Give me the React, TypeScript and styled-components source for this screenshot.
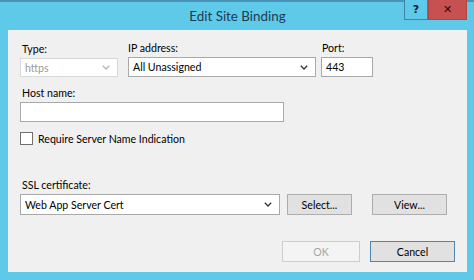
import React from "react"
import styled, { createGlobalStyle } from "styled-components"

const GlobalStyle = createGlobalStyle`
  html, body {
    margin: 0;
    padding: 0;
    background: #5fc9ea;
  }
  body {
    font-family: Lato, "Noto Sans", sans-serif;
    font-size: 10.6px;
    color: #000;
  }
`

const Frame = styled.div`
  width: 474px;
  height: 280px;
  box-sizing: border-box;
  background: #5fc9ea;
  border-top: 2px solid #4a93b4;
  padding: 0 7px 8px 8px;
  display: flex;
  flex-direction: column;
`

const TitleBar = styled.div`
  position: relative;
  height: 28px;
  display: flex;
  align-items: center;
  justify-content: center;
`

const Title = styled.div`
  font-size: 13.4px;
  color: #1c3d4f;
  margin-top: -1px;
`

const Controls = styled.div`
  position: absolute;
  top: -2px;
  right: 0;
  display: flex;
`

const CaptionButton = styled.div<{ $close?: boolean }>`
  height: 20px;
  width: ${p => (p.$close ? "39px" : "24px")};
  box-sizing: border-box;
  background: ${p => (p.$close ? "#c75151" : "#5fc9ea")};
  border: 1px solid ${p => (p.$close ? "#b04343" : "#3e86a6")};
  border-top: none;
  display: flex;
  align-items: center;
  justify-content: center;
  font-family: "DejaVu Sans", sans-serif;
  font-weight: bold;
  font-size: 11px;
  color: ${p => (p.$close ? "#2a0808" : "#0d2430")};
`

const Client = styled.div`
  flex: 1;
  background: #f0f0f0;
  padding: 11px 12px 0 12px;
  display: flex;
  flex-direction: column;
`

const Row = styled.div<{ $gap?: number; $top?: number; $end?: boolean }>`
  display: flex;
  align-items: flex-end;
  gap: ${p => p.$gap ?? 0}px;
  margin-top: ${p => p.$top ?? 0}px;
  justify-content: ${p => (p.$end ? "flex-end" : "flex-start")};
`

const Field = styled.div<{ $w: number }>`
  width: ${p => p.$w}px;
  display: flex;
  flex-direction: column;
  gap: 2px;
`

const Label = styled.div<{ $indent?: number }>`
  height: 14px;
  line-height: 14px;
  padding-left: ${p => p.$indent ?? 2}px;
  white-space: nowrap;
`

const Box = styled.div<{ $disabled?: boolean; $h?: number }>`
  height: ${p => p.$h ?? 20}px;
  box-sizing: border-box;
  background: #fff;
  border: 1px solid ${p => (p.$disabled ? "#d9d9d9" : "#a9a9a9")};
  display: flex;
  align-items: center;
  justify-content: space-between;
  padding: 0 7px 0 4px;
  color: ${p => (p.$disabled ? "#9a9a9a" : "#000")};
  white-space: nowrap;
`

const Chevron = ({ color = "#333" }: { color?: string }) => (
  <svg width="8" height="5" viewBox="0 0 8 5">
    <path d="M0.8 0.8 L4 4 L7.2 0.8" fill="none" stroke={color} strokeWidth="1.3" />
  </svg>
)

const CheckRow = styled.label`
  display: flex;
  align-items: center;
  gap: 5px;
  margin-top: 10px;
  height: 13px;
`

const CheckBox = styled.span`
  width: 13px;
  height: 13px;
  box-sizing: border-box;
  border: 1px solid #707070;
  background: #fff;
`

const Button = styled.div<{ $w: number; $disabled?: boolean; $default?: boolean }>`
  width: ${p => p.$w}px;
  height: 21px;
  box-sizing: border-box;
  display: flex;
  align-items: center;
  justify-content: center;
  background: ${p => (p.$disabled ? "#f4f4f4" : "#e1e1e1")};
  border: 1px solid
    ${p => (p.$disabled ? "#cdcdcd" : p.$default ? "#4f86ad" : "#adadad")};
  color: ${p => (p.$disabled ? "#a6a6a6" : "#000")};
`

export default function App() {
  return (
    <>
      <GlobalStyle />
      <Frame>
        <TitleBar>
          <Title>Edit Site Binding</Title>
          <Controls>
            <CaptionButton>?</CaptionButton>
            <CaptionButton $close>✕</CaptionButton>
          </Controls>
        </TitleBar>
        <Client>
          <Row>
            <Field $w={98}>
              <Label>Type:</Label>
              <Box $disabled $h={19}>
                https
                <Chevron color="#b5b5b5" />
              </Box>
            </Field>
            <Field $w={188} style={{ marginLeft: 10 }}>
              <Label $indent={0}>IP address:</Label>
              <Box>
                All Unassigned
                <Chevron />
              </Box>
            </Field>
            <Field $w={52} style={{ marginLeft: 5 }}>
              <Label $indent={1}>Port:</Label>
              <Box>443</Box>
            </Field>
          </Row>

          <Row $top={9}>
            <Field $w={264}>
              <Label>Host name:</Label>
              <Box />
            </Field>
          </Row>

          <CheckRow>
            <CheckBox />
            Require Server Name Indication
          </CheckRow>

          <Row $top={33}>
            <Field $w={260}>
              <Label>SSL certificate:</Label>
              <Box $h={21}>
                Web App Server Cert
                <Chevron />
              </Box>
            </Field>
            <Button $w={65} style={{ marginLeft: 7 }}>
              Select...
            </Button>
            <Button $w={75} style={{ marginLeft: 20 }}>
              View...
            </Button>
          </Row>

          <Row $top={26} $end $gap={10}>
            <Button $w={78} $disabled>
              OK
            </Button>
            <Button $w={85} $default>
              Cancel
            </Button>
          </Row>
        </Client>
      </Frame>
    </>
  )
}
